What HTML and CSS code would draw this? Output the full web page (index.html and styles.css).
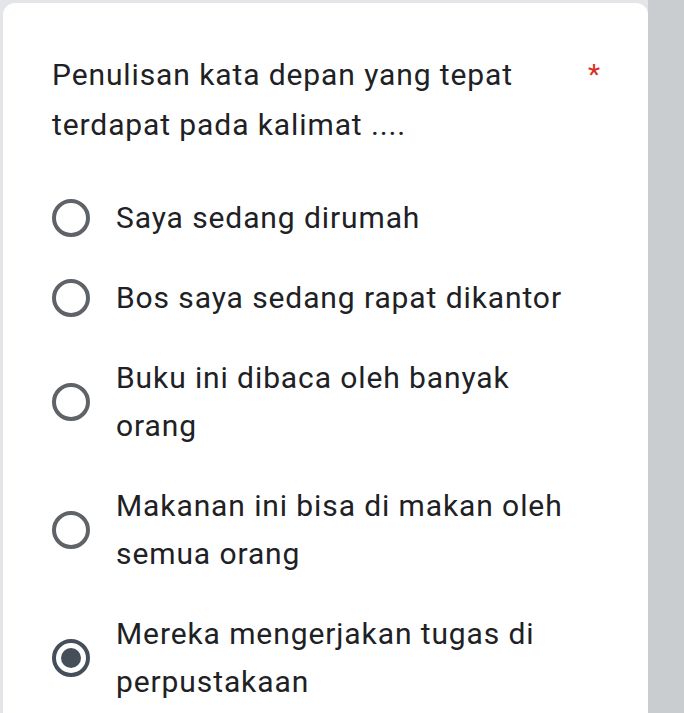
FILE: index.html
```html
<!DOCTYPE html>
<html lang="id">
<head>
    <meta charset="UTF-8">
    <meta name="viewport" content="width=device-width, initial-scale=1.0">
    <title>Pertanyaan</title>
    <link rel="stylesheet" href="styles.css">
</head>
<body>
    <div class="page">
        <div class="card">
            <div class="question">
                <div class="question-text">Penulisan kata depan yang tepat terdapat pada kalimat ....</div>
                <span class="required">*</span>
            </div>

            <div class="options">
                <label class="option">
                    <span class="radio"></span>
                    <span class="option-text">Saya sedang dirumah</span>
                </label>
                <label class="option">
                    <span class="radio"></span>
                    <span class="option-text">Bos saya sedang rapat dikantor</span>
                </label>
                <label class="option">
                    <span class="radio"></span>
                    <span class="option-text">Buku ini dibaca oleh banyak orang</span>
                </label>
                <label class="option">
                    <span class="radio"></span>
                    <span class="option-text">Makanan ini bisa di makan oleh semua orang</span>
                </label>
                <label class="option checked">
                    <span class="radio"></span>
                    <span class="option-text">Mereka mengerjakan tugas di perpustakaan</span>
                </label>
            </div>
        </div>
        <div class="side"></div>
    </div>
</body>
</html>
```

FILE: styles.css
```css
html, body {
    margin: 0;
    padding: 0;
    height: 100%;
}

body {
    background: #e3e5e8;
    font-family: Roboto, "Liberation Sans", Arial, sans-serif;
    color: #202124;
    overflow: hidden;
}

.page {
    display: flex;
    height: 100%;
    padding: 3px 0 0 3px;
    box-sizing: border-box;
}

.card {
    width: 645px;
    flex-shrink: 0;
    background: #ffffff;
    border-radius: 12px 12px 0 0;
    padding: 47px 40px 0 49px;
    box-sizing: border-box;
}

.side {
    flex: 1;
    background: #c9cdd0;
    margin-top: -3px;
}

.question {
    display: flex;
    align-items: flex-start;
}

.question-text {
    width: 500px;
    font-size: 30px;
    line-height: 50px;
    letter-spacing: 0.9px;
}

.required {
    margin-left: auto;
    margin-right: 8px;
    color: #d93025;
    font-size: 28px;
    line-height: 50px;
}

.options {
    margin-top: 28px;
}

.option {
    display: flex;
    align-items: center;
    padding: 16px 0;
}

.radio {
    width: 30px;
    height: 30px;
    border: 4px solid #5f6368;
    border-radius: 50%;
    flex-shrink: 0;
    margin-right: 26px;
    position: relative;
}

.option.checked .radio {
    border-color: #444f5a;
}

.option.checked .radio::after {
    content: "";
    position: absolute;
    left: 50%;
    top: 50%;
    width: 20px;
    height: 20px;
    margin: -10px 0 0 -10px;
    border-radius: 50%;
    background: #444f5a;
}

.option-text {
    width: 470px;
    font-size: 30px;
    line-height: 48px;
    letter-spacing: 0.9px;
}
```
